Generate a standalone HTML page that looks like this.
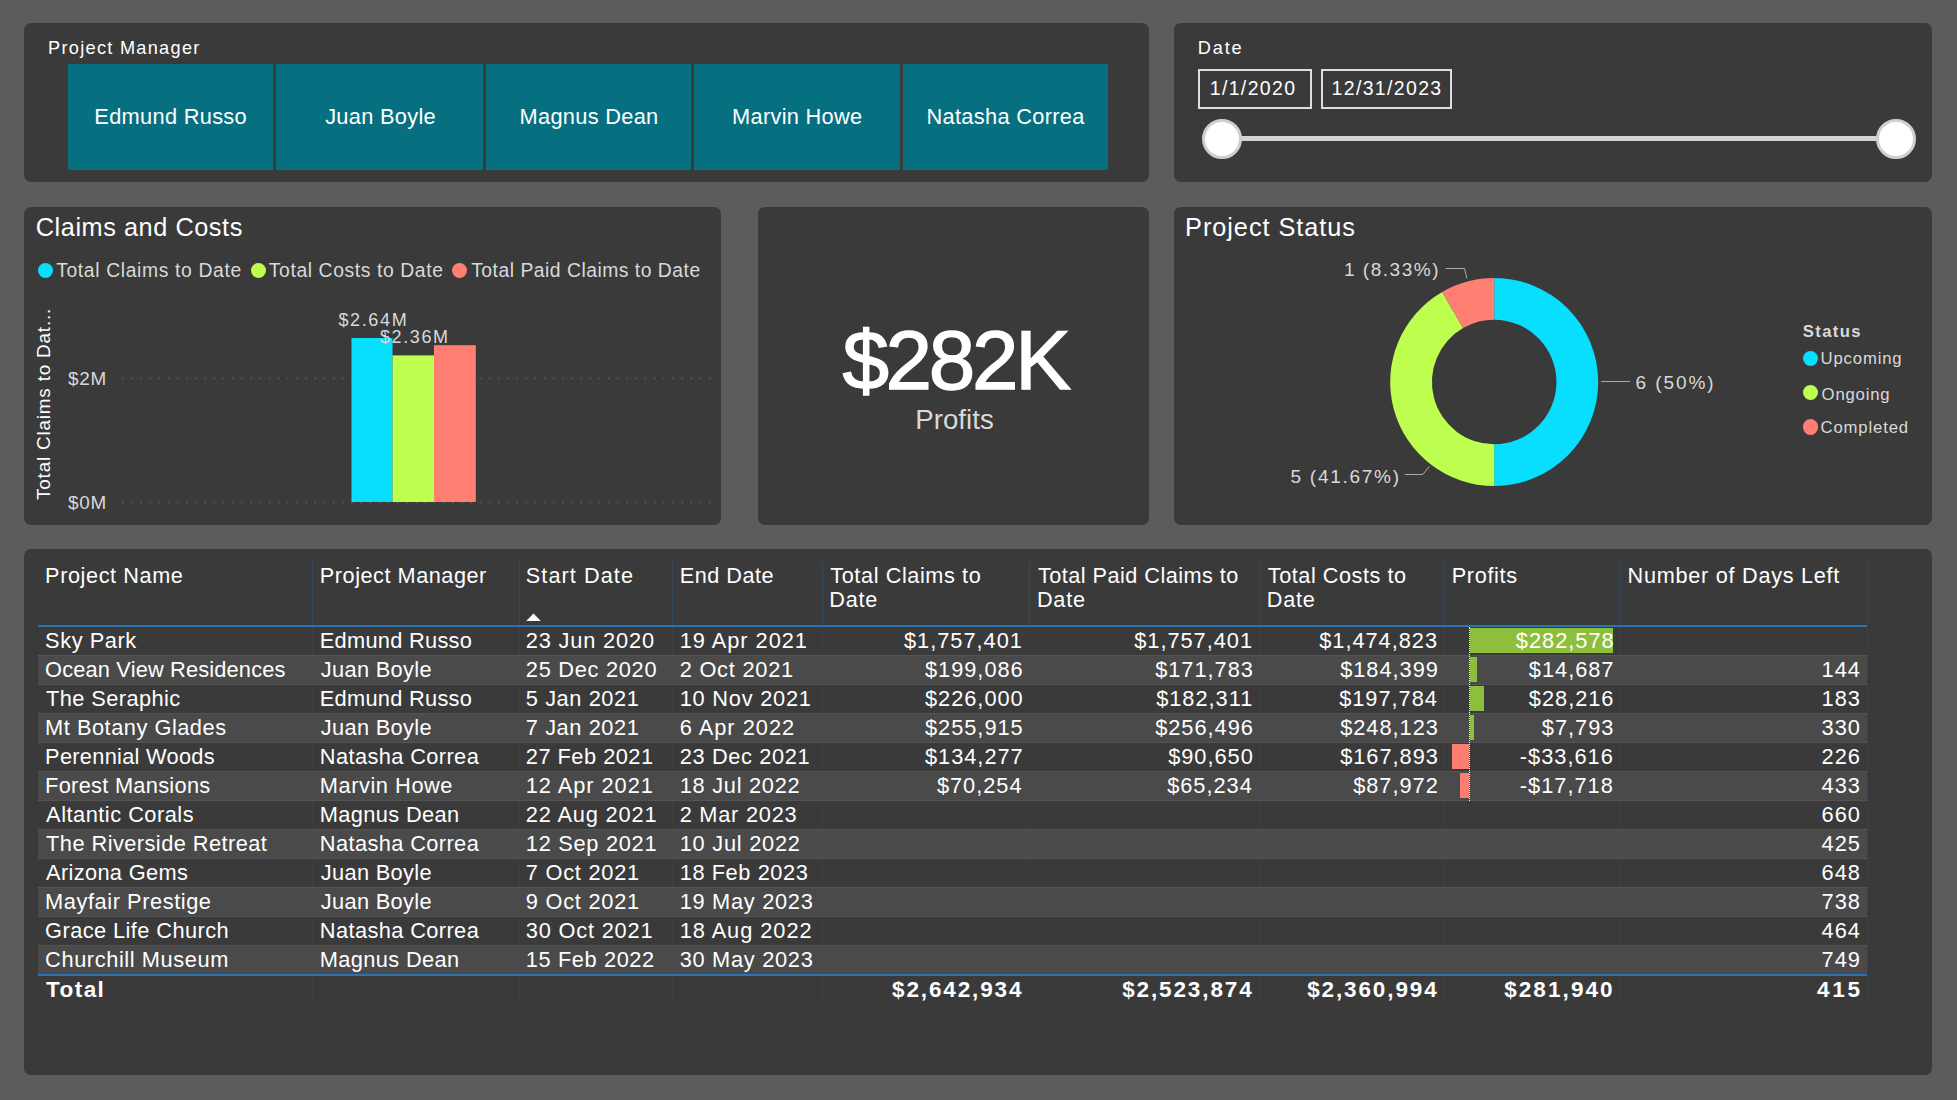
<!DOCTYPE html>
<html><head><meta charset="utf-8"><style>
html,body{margin:0;padding:0}
body{width:1957px;height:1100px;background:#5c5c5c;position:relative;overflow:hidden;font-family:"Liberation Sans",sans-serif;color:#fff}
.t{position:absolute;white-space:pre;line-height:120px}
</style></head><body>
<div style="position:absolute;left:24px;top:23px;width:1125px;height:159px;background:#3a3a3a;border-radius:7px;"></div><div style="position:absolute;left:1174px;top:23px;width:758px;height:159px;background:#3a3a3a;border-radius:7px;"></div><div style="position:absolute;left:24px;top:207px;width:697px;height:318px;background:#3a3a3a;border-radius:7px;"></div><div style="position:absolute;left:758px;top:207px;width:391px;height:318px;background:#3a3a3a;border-radius:7px;"></div><div style="position:absolute;left:1174px;top:207px;width:758px;height:318px;background:#3a3a3a;border-radius:7px;"></div><div style="position:absolute;left:24px;top:549px;width:1908px;height:526px;background:#3a3a3a;border-radius:7px;"></div><div style="position:absolute;left:68px;top:64px;width:205px;height:106px;background:#077080;"></div><div style="position:absolute;left:276px;top:64px;width:207px;height:106px;background:#077080;"></div><div style="position:absolute;left:486px;top:64px;width:205px;height:106px;background:#077080;"></div><div style="position:absolute;left:694px;top:64px;width:206px;height:106px;background:#077080;"></div><div style="position:absolute;left:903px;top:64px;width:205px;height:106px;background:#077080;"></div><div style="position:absolute;left:1198px;top:69px;width:110px;height:36px;border:2px solid #dedede"></div><div style="position:absolute;left:1321px;top:69px;width:127px;height:36px;border:2px solid #dedede"></div><div style="position:absolute;left:1222px;top:136px;width:674px;height:5px;background:#d4d4d4;"></div><div style="position:absolute;left:1202px;top:119px;width:34px;height:34px;border-radius:50%;background:#fff;border:3px solid #cfcfcf"></div><div style="position:absolute;left:1876px;top:119px;width:34px;height:34px;border-radius:50%;background:#fff;border:3px solid #cfcfcf"></div><div style="position:absolute;left:37.9px;top:262.8px;width:15px;height:15px;border-radius:50%;background:#08dfff"></div><div style="position:absolute;left:250.5px;top:262.8px;width:15px;height:15px;border-radius:50%;background:#bdfe4f"></div><div style="position:absolute;left:452.1px;top:262.8px;width:15px;height:15px;border-radius:50%;background:#ff7f73"></div><div style="position:absolute;left:1803.0px;top:350.59999999999997px;width:15.2px;height:15.2px;border-radius:50%;background:#08dfff"></div><div style="position:absolute;left:1803.0px;top:385.0px;width:15.2px;height:15.2px;border-radius:50%;background:#bdfe4f"></div><div style="position:absolute;left:1803.0px;top:419.4px;width:15.2px;height:15.2px;border-radius:50%;background:#ff7f73"></div>
<svg style="position:absolute;left:0;top:0" width="1957" height="1100"><line x1="122" y1="378.5" x2="712" y2="378.5" stroke="#606060" stroke-width="1.5" stroke-dasharray="1.5 7.67"/><line x1="122" y1="502.5" x2="712" y2="502.5" stroke="#606060" stroke-width="1.5" stroke-dasharray="1.5 7.67"/><rect x="351.5" y="338" width="41" height="164" fill="#08dfff"/><rect x="392.5" y="355.4" width="41.5" height="146.6" fill="#bdfe4f"/><rect x="434" y="345.2" width="41.8" height="156.8" fill="#ff7f73"/><path d="M1494.20,278.00 A104,104 0 0 1 1494.20,486.00 L1494.20,444.30 A62.3,62.3 0 0 0 1494.20,319.70 Z" fill="#08dfff"/><path d="M1494.20,486.00 A104,104 0 0 1 1442.20,291.93 L1463.05,328.05 A62.3,62.3 0 0 0 1494.20,444.30 Z" fill="#bdfe4f"/><path d="M1442.20,291.93 A104,104 0 0 1 1494.20,278.00 L1494.20,319.70 A62.3,62.3 0 0 0 1463.05,328.05 Z" fill="#ff7f73"/><polyline points="1445.7,268.5 1464.5,268.5 1467,278.7" fill="none" stroke="#a8a8a8" stroke-width="1"/><polyline points="1601.2,381.5 1630,381.5" fill="none" stroke="#a8a8a8" stroke-width="1"/><polyline points="1404.9,474.5 1422.8,474.5 1429.4,466.3" fill="none" stroke="#a8a8a8" stroke-width="1"/></svg>
<div style="position:absolute;left:312px;top:561px;width:1px;height:64px;background:#35475a;"></div><div style="position:absolute;left:312px;top:627px;width:1px;height:375px;background:#3f3f3f;"></div><div style="position:absolute;left:519px;top:561px;width:1px;height:64px;background:#35475a;"></div><div style="position:absolute;left:519px;top:627px;width:1px;height:375px;background:#3f3f3f;"></div><div style="position:absolute;left:672px;top:561px;width:1px;height:64px;background:#35475a;"></div><div style="position:absolute;left:672px;top:627px;width:1px;height:375px;background:#3f3f3f;"></div><div style="position:absolute;left:822px;top:561px;width:1px;height:64px;background:#35475a;"></div><div style="position:absolute;left:822px;top:627px;width:1px;height:375px;background:#3f3f3f;"></div><div style="position:absolute;left:1029px;top:561px;width:1px;height:64px;background:#35475a;"></div><div style="position:absolute;left:1029px;top:627px;width:1px;height:375px;background:#3f3f3f;"></div><div style="position:absolute;left:1259px;top:561px;width:1px;height:64px;background:#35475a;"></div><div style="position:absolute;left:1259px;top:627px;width:1px;height:375px;background:#3f3f3f;"></div><div style="position:absolute;left:1444px;top:561px;width:1px;height:64px;background:#35475a;"></div><div style="position:absolute;left:1444px;top:627px;width:1px;height:375px;background:#3f3f3f;"></div><div style="position:absolute;left:1620px;top:561px;width:1px;height:64px;background:#35475a;"></div><div style="position:absolute;left:1620px;top:627px;width:1px;height:375px;background:#3f3f3f;"></div><div style="position:absolute;left:1867px;top:561px;width:1px;height:64px;background:#35475a;"></div><div style="position:absolute;left:1867px;top:627px;width:1px;height:375px;background:#3f3f3f;"></div><div style="position:absolute;left:38px;top:655px;width:1829px;height:29px;background:#4a4a4a;"></div><div style="position:absolute;left:38px;top:655px;width:1829px;height:1px;background:#545454;"></div><div style="position:absolute;left:38px;top:684px;width:1829px;height:1px;background:#545454;"></div><div style="position:absolute;left:38px;top:713px;width:1829px;height:29px;background:#4a4a4a;"></div><div style="position:absolute;left:38px;top:713px;width:1829px;height:1px;background:#545454;"></div><div style="position:absolute;left:38px;top:742px;width:1829px;height:1px;background:#545454;"></div><div style="position:absolute;left:38px;top:771px;width:1829px;height:29px;background:#4a4a4a;"></div><div style="position:absolute;left:38px;top:771px;width:1829px;height:1px;background:#545454;"></div><div style="position:absolute;left:38px;top:800px;width:1829px;height:1px;background:#545454;"></div><div style="position:absolute;left:38px;top:829px;width:1829px;height:29px;background:#4a4a4a;"></div><div style="position:absolute;left:38px;top:829px;width:1829px;height:1px;background:#545454;"></div><div style="position:absolute;left:38px;top:858px;width:1829px;height:1px;background:#545454;"></div><div style="position:absolute;left:38px;top:887px;width:1829px;height:29px;background:#4a4a4a;"></div><div style="position:absolute;left:38px;top:887px;width:1829px;height:1px;background:#545454;"></div><div style="position:absolute;left:38px;top:916px;width:1829px;height:1px;background:#545454;"></div><div style="position:absolute;left:38px;top:945px;width:1829px;height:29px;background:#4a4a4a;"></div><div style="position:absolute;left:38px;top:945px;width:1829px;height:1px;background:#545454;"></div><div style="position:absolute;left:38px;top:625px;width:1829px;height:2px;background:#2a74b4;"></div><div style="position:absolute;left:38px;top:974px;width:1829px;height:2px;background:#2a74b4;"></div><div style="position:absolute;left:1470px;top:628.3px;width:142.70px;height:24.7px;background:#8dbf3c"></div><div style="position:absolute;left:1470px;top:657.3px;width:7.42px;height:24.7px;background:#8dbf3c"></div><div style="position:absolute;left:1470px;top:686.3px;width:14.25px;height:24.7px;background:#8dbf3c"></div><div style="position:absolute;left:1470px;top:715.3px;width:3.94px;height:24.7px;background:#8dbf3c"></div><div style="position:absolute;left:1452.02px;top:744.3px;width:16.98px;height:24.7px;background:#fd7e70"></div><div style="position:absolute;left:1460.05px;top:773.3px;width:8.95px;height:24.7px;background:#fd7e70"></div><div style="position:absolute;left:1469px;top:627px;width:0;height:174px;border-left:1px dotted #fff"></div><svg style="position:absolute;left:0;top:0" width="1957" height="1100"><polygon points="526.2,621 540.8,621 533.5,613.5" fill="#fff"/></svg>
<div style="position:absolute;left:0;top:0;width:1957px;height:1100px">
<div class="t" style="left:48.10px;top:-12.40px;font-size:18.17px;letter-spacing:1.286px;">Project Manager</div>
<div class="t" style="left:94.35px;top:57.20px;font-size:21.8px;letter-spacing:0.300px;">Edmund Russo</div>
<div class="t" style="left:325.15px;top:57.20px;font-size:21.8px;letter-spacing:0.300px;">Juan Boyle</div>
<div class="t" style="left:519.50px;top:57.20px;font-size:21.8px;letter-spacing:0.300px;">Magnus Dean</div>
<div class="t" style="left:732.00px;top:57.20px;font-size:21.8px;letter-spacing:0.300px;">Marvin Howe</div>
<div class="t" style="left:926.55px;top:57.20px;font-size:21.8px;letter-spacing:0.300px;">Natasha Correa</div>
<div class="t" style="left:1197.70px;top:-12.00px;font-size:18.17px;letter-spacing:1.867px;">Date</div>
<div class="t" style="left:1209.70px;top:28.20px;font-size:19.48px;letter-spacing:1.371px;">1/1/2020</div>
<div class="t" style="left:1331.60px;top:28.20px;font-size:19.48px;letter-spacing:1.344px;">12/31/2023</div>
<div class="t" style="left:35.80px;top:167.00px;font-size:25.29px;letter-spacing:0.560px;">Claims and Costs</div>
<div class="t" style="left:56.20px;top:210.90px;font-size:19.33px;letter-spacing:0.632px;color:#d9d9d9;">Total Claims to Date</div>
<div class="t" style="left:268.80px;top:210.90px;font-size:19.33px;letter-spacing:0.600px;color:#d9d9d9;">Total Costs to Date</div>
<div class="t" style="left:471.20px;top:210.90px;font-size:19.33px;letter-spacing:0.500px;color:#d9d9d9;">Total Paid Claims to Date</div>
<div class="t" style="left:68.00px;top:319.40px;font-size:18.9px;letter-spacing:0.800px;color:#d9d9d9;">$2M</div>
<div class="t" style="left:68.00px;top:443.00px;font-size:18.9px;letter-spacing:0.800px;color:#d9d9d9;">$0M</div>
<div class="t" style="left:50.10px;top:433.50px;font-size:18.9px;letter-spacing:0.810px;transform-origin:0px 66px;transform:rotate(-90deg);">Total Claims to Dat...</div>
<div class="t" style="left:338.40px;top:260.00px;font-size:18.02px;letter-spacing:1.640px;color:#d9d9d9;">$2.64M</div>
<div class="t" style="left:380.00px;top:277.00px;font-size:18.02px;letter-spacing:1.600px;color:#d9d9d9;">$2.36M</div>
<div class="t" style="left:842.40px;top:299.90px;font-size:83.58px;letter-spacing:-3.250px;-webkit-text-stroke:1.4px #fff;">$282K</div>
<div class="t" style="left:915.20px;top:360.30px;font-size:27.62px;letter-spacing:0.067px;color:#d9d9d9;">Profits</div>
<div class="t" style="left:1185.10px;top:167.00px;font-size:25.29px;letter-spacing:0.954px;">Project Status</div>
<div class="t" style="left:1343.90px;top:210.10px;font-size:19.04px;letter-spacing:1.512px;color:#d9d9d9;">1 (8.33%)</div>
<div class="t" style="left:1635.60px;top:323.40px;font-size:19.04px;letter-spacing:1.900px;color:#d9d9d9;">6 (50%)</div>
<div class="t" style="left:1290.50px;top:416.80px;font-size:19.04px;letter-spacing:1.722px;color:#d9d9d9;">5 (41.67%)</div>
<div class="t" style="left:1802.70px;top:271.90px;font-size:16.72px;letter-spacing:1.380px;font-weight:700;color:#d9d9d9;">Status</div>
<div class="t" style="left:1820.60px;top:298.70px;font-size:16.72px;letter-spacing:0.829px;color:#d9d9d9;">Upcoming</div>
<div class="t" style="left:1821.60px;top:334.90px;font-size:16.72px;letter-spacing:0.800px;color:#d9d9d9;">Ongoing</div>
<div class="t" style="left:1820.60px;top:367.60px;font-size:16.72px;letter-spacing:0.838px;color:#d9d9d9;">Completed</div>
<div class="t" style="left:45.10px;top:516.00px;font-size:21.66px;letter-spacing:0.600px;">Project Name</div>
<div class="t" style="left:319.80px;top:516.00px;font-size:21.66px;letter-spacing:0.543px;">Project Manager</div>
<div class="t" style="left:525.80px;top:516.00px;font-size:21.66px;letter-spacing:1.078px;">Start Date</div>
<div class="t" style="left:679.70px;top:516.00px;font-size:21.66px;letter-spacing:0.500px;">End Date</div>
<div class="t" style="left:830.30px;top:516.00px;font-size:21.66px;letter-spacing:0.600px;">Total Claims to</div>
<div class="t" style="left:829.30px;top:540.00px;font-size:21.66px;letter-spacing:0.733px;">Date</div>
<div class="t" style="left:1038.00px;top:516.00px;font-size:21.66px;letter-spacing:0.474px;">Total Paid Claims to</div>
<div class="t" style="left:1037.00px;top:540.00px;font-size:21.66px;letter-spacing:0.733px;">Date</div>
<div class="t" style="left:1267.80px;top:516.00px;font-size:21.66px;letter-spacing:0.538px;">Total Costs to</div>
<div class="t" style="left:1266.80px;top:540.00px;font-size:21.66px;letter-spacing:0.733px;">Date</div>
<div class="t" style="left:1451.70px;top:516.00px;font-size:21.66px;letter-spacing:0.667px;">Profits</div>
<div class="t" style="left:1627.60px;top:516.00px;font-size:21.66px;letter-spacing:0.733px;">Number of Days Left</div>
<div class="t" style="left:45.10px;top:581.20px;font-size:21.8px;letter-spacing:0.557px;">Sky Park</div>
<div class="t" style="left:319.80px;top:581.20px;font-size:21.8px;letter-spacing:0.282px;">Edmund Russo</div>
<div class="t" style="left:525.80px;top:581.20px;font-size:21.8px;letter-spacing:0.830px;">23 Jun 2020</div>
<div class="t" style="left:679.70px;top:581.20px;font-size:21.8px;letter-spacing:0.970px;">19 Apr 2021</div>
<div class="t" style="left:904.00px;top:581.20px;font-size:21.8px;letter-spacing:0.978px;">$1,757,401</div>
<div class="t" style="left:1134.20px;top:581.20px;font-size:21.8px;letter-spacing:0.978px;">$1,757,401</div>
<div class="t" style="left:1319.20px;top:581.20px;font-size:21.8px;letter-spacing:0.978px;">$1,474,823</div>
<div class="t" style="left:1515.86px;top:581.20px;font-size:21.8px;letter-spacing:0.978px;">$282,578</div>
<div class="t" style="left:45.10px;top:610.20px;font-size:21.8px;letter-spacing:0.160px;">Ocean View Residences</div>
<div class="t" style="left:320.80px;top:610.20px;font-size:21.8px;letter-spacing:0.322px;">Juan Boyle</div>
<div class="t" style="left:525.80px;top:610.20px;font-size:21.8px;letter-spacing:0.710px;">25 Dec 2020</div>
<div class="t" style="left:679.70px;top:610.20px;font-size:21.8px;letter-spacing:0.767px;">2 Oct 2021</div>
<div class="t" style="left:924.96px;top:610.20px;font-size:21.8px;letter-spacing:0.978px;">$199,086</div>
<div class="t" style="left:1155.16px;top:610.20px;font-size:21.8px;letter-spacing:0.978px;">$171,783</div>
<div class="t" style="left:1340.16px;top:610.20px;font-size:21.8px;letter-spacing:0.978px;">$184,399</div>
<div class="t" style="left:1528.83px;top:610.20px;font-size:21.8px;letter-spacing:0.978px;">$14,687</div>
<div class="t" style="left:1821.54px;top:610.20px;font-size:21.8px;letter-spacing:0.978px;">144</div>
<div class="t" style="left:46.10px;top:639.20px;font-size:21.8px;letter-spacing:0.400px;">The Seraphic</div>
<div class="t" style="left:319.80px;top:639.20px;font-size:21.8px;letter-spacing:0.282px;">Edmund Russo</div>
<div class="t" style="left:525.80px;top:639.20px;font-size:21.8px;letter-spacing:0.578px;">5 Jan 2021</div>
<div class="t" style="left:679.70px;top:639.20px;font-size:21.8px;letter-spacing:0.770px;">10 Nov 2021</div>
<div class="t" style="left:924.96px;top:639.20px;font-size:21.8px;letter-spacing:0.978px;">$226,000</div>
<div class="t" style="left:1156.16px;top:639.20px;font-size:21.8px;letter-spacing:0.978px;">$182,311</div>
<div class="t" style="left:1339.16px;top:639.20px;font-size:21.8px;letter-spacing:0.978px;">$197,784</div>
<div class="t" style="left:1528.83px;top:639.20px;font-size:21.8px;letter-spacing:0.978px;">$28,216</div>
<div class="t" style="left:1821.54px;top:639.20px;font-size:21.8px;letter-spacing:0.978px;">183</div>
<div class="t" style="left:45.10px;top:668.20px;font-size:21.8px;letter-spacing:0.513px;">Mt Botany Glades</div>
<div class="t" style="left:320.80px;top:668.20px;font-size:21.8px;letter-spacing:0.322px;">Juan Boyle</div>
<div class="t" style="left:525.80px;top:668.20px;font-size:21.8px;letter-spacing:0.578px;">7 Jan 2021</div>
<div class="t" style="left:679.70px;top:668.20px;font-size:21.8px;letter-spacing:1.000px;">6 Apr 2022</div>
<div class="t" style="left:924.96px;top:668.20px;font-size:21.8px;letter-spacing:0.978px;">$255,915</div>
<div class="t" style="left:1155.16px;top:668.20px;font-size:21.8px;letter-spacing:0.978px;">$256,496</div>
<div class="t" style="left:1340.16px;top:668.20px;font-size:21.8px;letter-spacing:0.978px;">$248,123</div>
<div class="t" style="left:1541.81px;top:668.20px;font-size:21.8px;letter-spacing:0.978px;">$7,793</div>
<div class="t" style="left:1821.54px;top:668.20px;font-size:21.8px;letter-spacing:0.978px;">330</div>
<div class="t" style="left:45.10px;top:697.20px;font-size:21.8px;letter-spacing:0.279px;">Perennial Woods</div>
<div class="t" style="left:319.80px;top:697.20px;font-size:21.8px;letter-spacing:0.392px;">Natasha Correa</div>
<div class="t" style="left:525.80px;top:697.20px;font-size:21.8px;letter-spacing:0.490px;">27 Feb 2021</div>
<div class="t" style="left:679.70px;top:697.20px;font-size:21.8px;letter-spacing:0.640px;">23 Dec 2021</div>
<div class="t" style="left:924.96px;top:697.20px;font-size:21.8px;letter-spacing:0.978px;">$134,277</div>
<div class="t" style="left:1168.13px;top:697.20px;font-size:21.8px;letter-spacing:0.978px;">$90,650</div>
<div class="t" style="left:1340.16px;top:697.20px;font-size:21.8px;letter-spacing:0.978px;">$167,893</div>
<div class="t" style="left:1519.86px;top:697.20px;font-size:21.8px;letter-spacing:0.978px;">-$33,616</div>
<div class="t" style="left:1821.54px;top:697.20px;font-size:21.8px;letter-spacing:0.978px;">226</div>
<div class="t" style="left:45.10px;top:726.20px;font-size:21.8px;letter-spacing:0.286px;">Forest Mansions</div>
<div class="t" style="left:319.80px;top:726.20px;font-size:21.8px;letter-spacing:0.550px;">Marvin Howe</div>
<div class="t" style="left:525.80px;top:726.20px;font-size:21.8px;letter-spacing:0.950px;">12 Apr 2021</div>
<div class="t" style="left:679.70px;top:726.20px;font-size:21.8px;letter-spacing:0.730px;">18 Jul 2022</div>
<div class="t" style="left:936.93px;top:726.20px;font-size:21.8px;letter-spacing:0.978px;">$70,254</div>
<div class="t" style="left:1167.13px;top:726.20px;font-size:21.8px;letter-spacing:0.978px;">$65,234</div>
<div class="t" style="left:1353.13px;top:726.20px;font-size:21.8px;letter-spacing:0.978px;">$87,972</div>
<div class="t" style="left:1519.86px;top:726.20px;font-size:21.8px;letter-spacing:0.978px;">-$17,718</div>
<div class="t" style="left:1821.54px;top:726.20px;font-size:21.8px;letter-spacing:0.978px;">433</div>
<div class="t" style="left:46.10px;top:755.20px;font-size:21.8px;letter-spacing:0.500px;">Altantic Corals</div>
<div class="t" style="left:319.80px;top:755.20px;font-size:21.8px;letter-spacing:0.370px;">Magnus Dean</div>
<div class="t" style="left:525.80px;top:755.20px;font-size:21.8px;letter-spacing:0.840px;">22 Aug 2021</div>
<div class="t" style="left:679.70px;top:755.20px;font-size:21.8px;letter-spacing:0.744px;">2 Mar 2023</div>
<div class="t" style="left:1821.54px;top:755.20px;font-size:21.8px;letter-spacing:0.978px;">660</div>
<div class="t" style="left:46.10px;top:784.20px;font-size:21.8px;letter-spacing:0.440px;">The Riverside Retreat</div>
<div class="t" style="left:319.80px;top:784.20px;font-size:21.8px;letter-spacing:0.392px;">Natasha Correa</div>
<div class="t" style="left:525.80px;top:784.20px;font-size:21.8px;letter-spacing:0.710px;">12 Sep 2021</div>
<div class="t" style="left:679.70px;top:784.20px;font-size:21.8px;letter-spacing:0.760px;">10 Jul 2022</div>
<div class="t" style="left:1821.54px;top:784.20px;font-size:21.8px;letter-spacing:0.978px;">425</div>
<div class="t" style="left:46.10px;top:813.20px;font-size:21.8px;letter-spacing:0.327px;">Arizona Gems</div>
<div class="t" style="left:320.80px;top:813.20px;font-size:21.8px;letter-spacing:0.322px;">Juan Boyle</div>
<div class="t" style="left:525.80px;top:813.20px;font-size:21.8px;letter-spacing:0.744px;">7 Oct 2021</div>
<div class="t" style="left:679.70px;top:813.20px;font-size:21.8px;letter-spacing:0.580px;">18 Feb 2023</div>
<div class="t" style="left:1821.54px;top:813.20px;font-size:21.8px;letter-spacing:0.978px;">648</div>
<div class="t" style="left:45.10px;top:842.20px;font-size:21.8px;letter-spacing:0.560px;">Mayfair Prestige</div>
<div class="t" style="left:320.80px;top:842.20px;font-size:21.8px;letter-spacing:0.322px;">Juan Boyle</div>
<div class="t" style="left:525.80px;top:842.20px;font-size:21.8px;letter-spacing:0.744px;">9 Oct 2021</div>
<div class="t" style="left:679.70px;top:842.20px;font-size:21.8px;letter-spacing:0.710px;">19 May 2023</div>
<div class="t" style="left:1821.54px;top:842.20px;font-size:21.8px;letter-spacing:0.978px;">738</div>
<div class="t" style="left:45.10px;top:871.20px;font-size:21.8px;letter-spacing:0.412px;">Grace Life Church</div>
<div class="t" style="left:319.80px;top:871.20px;font-size:21.8px;letter-spacing:0.392px;">Natasha Correa</div>
<div class="t" style="left:525.80px;top:871.20px;font-size:21.8px;letter-spacing:0.800px;">30 Oct 2021</div>
<div class="t" style="left:679.70px;top:871.20px;font-size:21.8px;letter-spacing:0.950px;">18 Aug 2022</div>
<div class="t" style="left:1821.54px;top:871.20px;font-size:21.8px;letter-spacing:0.978px;">464</div>
<div class="t" style="left:45.10px;top:900.20px;font-size:21.8px;letter-spacing:0.593px;">Churchill Museum</div>
<div class="t" style="left:319.80px;top:900.20px;font-size:21.8px;letter-spacing:0.370px;">Magnus Dean</div>
<div class="t" style="left:525.80px;top:900.20px;font-size:21.8px;letter-spacing:0.600px;">15 Feb 2022</div>
<div class="t" style="left:679.70px;top:900.20px;font-size:21.8px;letter-spacing:0.710px;">30 May 2023</div>
<div class="t" style="left:1821.54px;top:900.20px;font-size:21.8px;letter-spacing:0.978px;">749</div>
<div class="t" style="left:46.10px;top:930.00px;font-size:22.53px;letter-spacing:1.400px;font-weight:700;">Total</div>
<div class="t" style="left:892.00px;top:930.00px;font-size:22.53px;letter-spacing:1.867px;font-weight:700;">$2,642,934</div>
<div class="t" style="left:1122.20px;top:930.00px;font-size:22.53px;letter-spacing:1.867px;font-weight:700;">$2,523,874</div>
<div class="t" style="left:1307.20px;top:930.00px;font-size:22.53px;letter-spacing:1.867px;font-weight:700;">$2,360,994</div>
<div class="t" style="left:1504.20px;top:930.00px;font-size:22.53px;letter-spacing:2.071px;font-weight:700;">$281,940</div>
<div class="t" style="left:1816.90px;top:930.00px;font-size:22.53px;letter-spacing:2.800px;font-weight:700;">415</div>
</div>
</body></html>
